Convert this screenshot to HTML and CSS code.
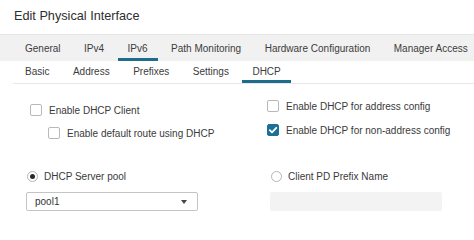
FILE: index.html
```html
<!DOCTYPE html>
<html>
<head>
<meta charset="utf-8">
<link rel="stylesheet" href="styles.css">
</head>
<body>
<div class="dialog">
  <div class="title">Edit Physical Interface</div>
  <div class="tabbar">
    <div class="tab">General</div>
    <div class="tab">IPv4</div>
    <div class="tab active">IPv6</div>
    <div class="tab">Path Monitoring</div>
    <div class="tab">Hardware Configuration</div>
    <div class="tab">Manager Access</div>
  </div>
  <div class="subtabs">
    <div class="subtab">Basic</div>
    <div class="subtab">Address</div>
    <div class="subtab">Prefixes</div>
    <div class="subtab">Settings</div>
    <div class="subtab active">DHCP</div>
  </div>
  <div class="content">
    <div class="col left">
      <label class="check"><span class="box"></span>Enable DHCP Client</label>
      <label class="check indent"><span class="box"></span>Enable default route using DHCP</label>
    </div>
    <div class="col right">
      <label class="check"><span class="box"></span>Enable DHCP for address config</label>
      <label class="check"><span class="box checked"><svg viewBox="0 0 12 12" width="12" height="12"><path d="M2.8 6.2 L5 8.4 L9.3 3.8" fill="none" stroke="#fff" stroke-width="1.8" stroke-linecap="round" stroke-linejoin="round"/></svg></span>Enable DHCP for non-address config</label>
    </div>
  </div>
  <div class="pools">
    <div class="pool left-pool">
      <label class="radio"><span class="dot on"></span>DHCP Server pool</label>
      <div class="select"><span>pool1</span><span class="caret"></span></div>
    </div>
    <div class="pool right-pool">
      <label class="radio"><span class="dot"></span>Client PD Prefix Name</label>
      <div class="input"></div>
    </div>
  </div>
</div>
</body>
</html>
```

FILE: styles.css
```css
* { box-sizing: border-box; }
html, body { margin: 0; padding: 0; background: #fff; }
body {
  font-family: "Liberation Sans", Arial, sans-serif;
  font-size: 10px;
  color: #3a3a3a;
  width: 474px;
  height: 217px;
  overflow: hidden;
}
.title {
  font-size: 12.7px;
  color: #2e2e2e;
  padding: 9px 0 0 14px;
  height: 34px;
}
.tabbar {
  display: flex;
  gap: 3.5px;
  background: #f1f1f1;
  border-top: 1px solid #e6e6e6;
  height: 27px;
  padding-left: 15px;
  white-space: nowrap;
}
.tab {
  padding: 0 10px;
  color: #3c3c3c;
  border-bottom: 3px solid transparent;
  line-height: 28px;
  height: 26px;
}
.tab.active {
  border-bottom: 3px solid #1d6c8e;
}
.subtabs {
  display: flex;
  gap: 3.5px;
  margin-left: 13px;
  padding-left: 2px;
  height: 23px;
  border-bottom: 1px solid #e8e8e8;
}
.subtab {
  padding: 0 10px;
  line-height: 21px;
  height: 22px;
  color: #3c3c3c;
  border-bottom: 3px solid transparent;
}
.subtab.active { border-bottom-color: #1d6c8e; }
.content {
  display: flex;
  padding-top: 16px;
}
.col { display: flex; flex-direction: column; }
.left { width: 267px; padding-left: 30px; gap: 11px; padding-top: 4px; }
.right { gap: 12px; }
.check {
  display: flex;
  align-items: center;
  height: 12px;
  white-space: nowrap;
}
.check.indent { margin-left: 18px; }
.box {
  width: 12px;
  height: 12px;
  border: 1px solid #b8b8b8;
  border-radius: 2px;
  margin-right: 7px;
  background: #fff;
  display: inline-flex;
}
.box.checked {
  background: #1d6f98;
  border-color: #1d6f98;
}
.box.checked svg { margin: -1px; }
.pools {
  display: flex;
  padding-top: 32px;
}
.pool { display: flex; flex-direction: column; }
.left-pool { width: 270px; padding-left: 26px; }
.right-pool { padding-left: 0; }
.radio {
  display: flex;
  align-items: center;
  height: 11px;
  margin-left: 1px;
  white-space: nowrap;
}
.dot {
  width: 11px;
  height: 11px;
  border: 1px solid #b4b4b4;
  border-radius: 50%;
  margin-right: 6px;
  position: relative;
  background: #fff;
}
.dot.on::after {
  content: "";
  position: absolute;
  left: 2px; top: 2px;
  width: 5px; height: 5px;
  border-radius: 50%;
  background: #2b2b2b;
}
.select {
  margin-top: 10px;
  width: 172px;
  height: 19px;
  border: 1px solid #c4c4c4;
  border-radius: 2px;
  display: flex;
  align-items: center;
  justify-content: space-between;
  padding: 0 8px 0 8px;
  color: #333;
}
.caret {
  width: 0; height: 0;
  border-left: 3px solid transparent;
  border-right: 3px solid transparent;
  border-top: 4px solid #444;
  margin-right: 2px;
}
.input {
  margin-top: 10px;
  width: 172px;
  height: 19px;
  background: #f3f3f3;
  border-radius: 2px;
}
```
